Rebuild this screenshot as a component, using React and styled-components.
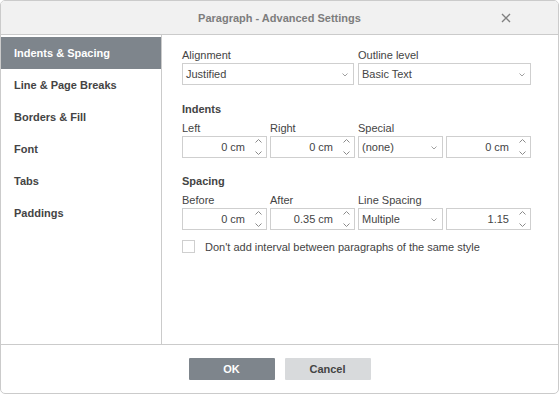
import React from "react";
import styled, { createGlobalStyle } from "styled-components";

const Global = createGlobalStyle`
  html, body { margin: 0; padding: 0; background: #fff; }
  body { font-family: "Liberation Sans", Arial, sans-serif; font-size: 11px; color: #444; }
  * { box-sizing: border-box; }
`;

const Dialog = styled.div`
  width: 559px;
  height: 394px;
  border: 1px solid #cbcbcb;
  border-radius: 5px;
  display: flex;
  flex-direction: column;
  overflow: hidden;
  background: #fff;
`;

const Header = styled.div`
  height: 34px;
  flex: none;
  background: #f1f1f1;
  border-bottom: 1px solid #cbcbcb;
  display: flex;
  align-items: center;
  justify-content: center;
  position: relative;
`;

const Title = styled.div`
  font-weight: bold;
  font-size: 11px;
  color: #7d7d7d;
`;

const Close = styled.button`
  position: absolute;
  right: 46px;
  top: 11px;
  width: 12px;
  height: 12px;
  padding: 0;
  border: 0;
  background: none;
  display: flex;
  align-items: center;
  justify-content: center;
`;

const Body = styled.div`
  flex: 1;
  display: flex;
  min-height: 0;
`;

const Sidebar = styled.div`
  width: 161px;
  flex: none;
  border-right: 1px solid #cbcbcb;
  padding-top: 2px;
  display: flex;
  flex-direction: column;
`;

const NavItem = styled.div`
  height: 32px;
  display: flex;
  align-items: center;
  padding-left: 13px;
  font-weight: bold;
  font-size: 11px;
  color: ${(p) => (p.$active ? "#fff" : "#444")};
  background: ${(p) => (p.$active ? "#7e858c" : "transparent")};
`;

const Content = styled.div`
  flex: 1;
  padding: 14px 0 0 20px;
`;

const Grid = styled.div`
  display: grid;
  grid-template-columns: ${(p) => p.$cols};
  column-gap: ${(p) => p.$gap}px;
`;

const Field = styled.div`
  display: flex;
  flex-direction: column;
`;

const Label = styled.div`
  line-height: 13px;
  height: 13px;
  margin-bottom: 1px;
  color: #444;
`;

const SectionTitle = styled.div`
  font-weight: bold;
  line-height: 13px;
  margin-top: ${(p) => p.$top}px;
  margin-bottom: 6px;
  color: #444;
`;

const Box = styled.div`
  height: 22px;
  border: 1px solid #cfcfcf;
  display: flex;
  align-items: center;
  position: relative;
  background: #fff;
  color: #444;
`;

const SelectText = styled.span`
  flex: 1;
  padding-left: 3px;
  white-space: nowrap;
`;

const NumberText = styled.span`
  flex: 1;
  text-align: right;
  padding-right: 21px;
  white-space: nowrap;
`;

const Caret = styled.span`
  position: absolute;
  right: 5px;
  top: 9px;
  display: flex;
`;

const Spin = styled.span`
  position: absolute;
  right: 4px;
  top: 2px;
  bottom: 2px;
  display: flex;
  flex-direction: column;
  justify-content: space-between;
`;

const CheckRow = styled.div`
  display: flex;
  align-items: center;
  margin-top: 10px;
  gap: 10px;
`;

const Check = styled.span`
  width: 13px;
  height: 13px;
  border: 1px solid #cfcfcf;
  background: #fff;
  flex: none;
`;

const Footer = styled.div`
  height: 49px;
  flex: none;
  border-top: 1px solid #cbcbcb;
  display: flex;
  align-items: center;
  justify-content: center;
  gap: 10px;
  padding-bottom: 1px;
`;

const Button = styled.button`
  width: 86px;
  height: 22px;
  border: 0;
  border-radius: 1px;
  font-family: "Liberation Sans", Arial, sans-serif;
  font-size: 11px;
  font-weight: bold;
  color: ${(p) => (p.$primary ? "#fff" : "#444")};
  background: ${(p) => (p.$primary ? "#7e858c" : "#d8dadc")};
`;

const Chevron = ({ up }) => (
  <svg width="7" height="4" viewBox="0 0 7 4">
    <path
      d={up ? "M0.5 3.5 L3.5 0.5 L6.5 3.5" : "M0.5 0.5 L3.5 3.5 L6.5 0.5"}
      fill="none"
      stroke="#8a8a8a"
      strokeWidth="1"
    />
  </svg>
);

const Select = ({ value }) => (
  <Box>
    <SelectText>{value}</SelectText>
    <Caret>
      <svg width="6" height="4" viewBox="0 0 6 4">
        <path d="M0.5 0.5 L3 3 L5.5 0.5" fill="none" stroke="#a0a0a0" strokeWidth="1" />
      </svg>
    </Caret>
  </Box>
);

const Spinner = ({ value }) => (
  <Box>
    <NumberText>{value}</NumberText>
    <Spin>
      <Chevron up />
      <Chevron />
    </Spin>
  </Box>
);

const nav = [
  "Indents & Spacing",
  "Line & Page Breaks",
  "Borders & Fill",
  "Font",
  "Tabs",
  "Paddings",
];

const TWO = "172px 173px";
const FOUR = "85px 85px 85px 85px";

export default function App() {
  return (
    <>
      <Global />
      <Dialog>
        <Header>
          <Title>Paragraph - Advanced Settings</Title>
          <Close aria-label="close">
            <svg width="10" height="10" viewBox="0 0 10 10">
              <path d="M1 1 L9 9 M9 1 L1 9" stroke="#808080" strokeWidth="1.4" />
            </svg>
          </Close>
        </Header>
        <Body>
          <Sidebar>
            {nav.map((n, i) => (
              <NavItem key={n} $active={i === 0}>
                {n}
              </NavItem>
            ))}
          </Sidebar>
          <Content>
            <Grid $cols={TWO} $gap={4}>
              <Field>
                <Label>Alignment</Label>
                <Select value="Justified" />
              </Field>
              <Field>
                <Label>Outline level</Label>
                <Select value="Basic Text" />
              </Field>
            </Grid>
            <SectionTitle $top={18}>Indents</SectionTitle>
            <Grid $cols={FOUR} $gap={3}>
              <Field>
                <Label>Left</Label>
                <Spinner value="0 cm" />
              </Field>
              <Field>
                <Label>Right</Label>
                <Spinner value="0 cm" />
              </Field>
              <Field>
                <Label>Special</Label>
                <Select value="(none)" />
              </Field>
              <Field>
                <Label>&nbsp;</Label>
                <Spinner value="0 cm" />
              </Field>
            </Grid>
            <SectionTitle $top={17}>Spacing</SectionTitle>
            <Grid $cols={FOUR} $gap={3}>
              <Field>
                <Label>Before</Label>
                <Spinner value="0 cm" />
              </Field>
              <Field>
                <Label>After</Label>
                <Spinner value="0.35 cm" />
              </Field>
              <Field>
                <Label>Line Spacing</Label>
                <Select value="Multiple" />
              </Field>
              <Field>
                <Label>&nbsp;</Label>
                <Spinner value="1.15" />
              </Field>
            </Grid>
            <CheckRow>
              <Check />
              <span>Don't add interval between paragraphs of the same style</span>
            </CheckRow>
          </Content>
        </Body>
        <Footer>
          <Button $primary>OK</Button>
          <Button>Cancel</Button>
        </Footer>
      </Dialog>
    </>
  );
}
